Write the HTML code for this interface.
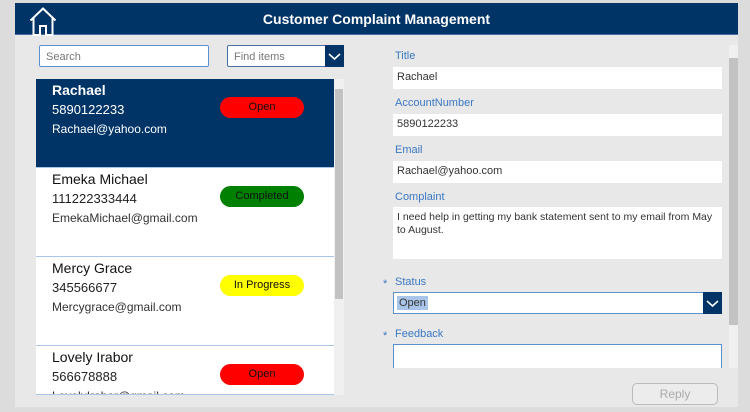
<!DOCTYPE html>
<html><head><meta charset="utf-8"><style>
*{margin:0;padding:0;box-sizing:border-box}
html,body{width:750px;height:412px;overflow:hidden}
body{background:#dcdcdc;font-family:"Liberation Sans",sans-serif;position:relative}
.a{position:absolute}
#app{left:15px;top:3px;width:723px;height:404px;background:#e8e8e8}
#hdr{left:15px;top:3px;width:723px;height:32px;background:#003366;border-bottom:1px solid #4a6fa5}
#hdr .t{left:0;width:723px;top:8px;text-align:center;color:#fff;font-weight:bold;font-size:14px}
.inp{background:#fff;border:1px solid #5b8fd0;border-radius:2px;font-size:11px;color:#777;padding:5px 6px}
.item{left:36px;width:298px;height:89px;background:#fff;border-bottom:1px solid #a9c6ea;overflow:hidden}
.item .n{position:absolute;left:16px;top:3px;font-size:14px;color:#111}
.item .p{position:absolute;left:16px;top:23px;font-size:13px;color:#222}
.item .e{position:absolute;left:16px;top:43px;font-size:12px;color:#333}
.pill{position:absolute;left:184px;top:18px;width:84px;height:21px;border-radius:11px;text-align:center;font-size:11px;line-height:21px;color:#111}
.lbl{left:395px;font-size:11px;color:#3a78c2}
.fld{left:393px;width:329px;height:22px;background:#fff;font-size:11px;color:#333;padding:4px 4px}
.star{left:383px;font-size:11px;color:#3a78c2}
</style></head><body>
<div class="a" id="app"></div>
<div class="a" id="hdr"><div class="a t">Customer Complaint Management</div>
<svg class="a" style="left:14px;top:2px" width="32" height="31" viewBox="0 0 32 31"><path d="M1.5 15.5 L14 3.5 L26.5 15.5 M4.5 13 V30 H11 V21 H17 V30 H23.5 V13" fill="none" stroke="#fff" stroke-width="2"/></svg></div>
<div class="a inp" style="left:39px;top:45px;width:170px;height:22px">Search</div>
<div class="a inp" style="left:227px;top:45px;width:117px;height:22px;border-color:#4a6fa5">Find items</div>
<div class="a" style="left:325px;top:45px;width:19px;height:22px;background:#003366"><svg width="19" height="22"><path d="M4 9 L9.5 14 L15 9" fill="none" stroke="#fff" stroke-width="1.6"/></svg></div>
<div class="a" style="left:36px;top:79px;width:308px;height:316px;background:#fff;overflow:hidden">
<div class="a item" style="left:0;top:0;background:#003366"><div class="n" style="color:#fff;font-weight:bold">Rachael</div><div class="p" style="color:#fff">5890122233</div><div class="e" style="color:#fff">Rachael@yahoo.com</div><div class="pill" style="background:#f00">Open</div></div>
<div class="a item" style="left:0;top:89px"><div class="n">Emeka Michael</div><div class="p">111222333444</div><div class="e">EmekaMichael@gmail.com</div><div class="pill" style="background:#008000">Completed</div></div>
<div class="a item" style="left:0;top:178px"><div class="n">Mercy Grace</div><div class="p">345566677</div><div class="e">Mercygrace@gmail.com</div><div class="pill" style="background:#ff0">In Progress</div></div>
<div class="a item" style="left:0;top:267px;height:49px"><div class="n">Lovely Irabor</div><div class="p">566678888</div><div class="e">LovelyIrabor@gmail.com</div><div class="pill" style="background:#f00">Open</div></div>
<div class="a" style="left:298px;top:0;width:10px;height:316px;background:#f0f0f0"></div>
<div class="a" style="left:299px;top:10px;width:8px;height:210px;background:#c2c2c2"></div>
</div>
<div class="a lbl" style="top:50px">Title</div>
<div class="a fld" style="top:67px">Rachael</div>
<div class="a lbl" style="top:97px">AccountNumber</div>
<div class="a fld" style="top:114px">5890122233</div>
<div class="a lbl" style="top:144px">Email</div>
<div class="a fld" style="top:161px">Rachael@yahoo.com</div>
<div class="a lbl" style="top:191px">Complaint</div>
<div class="a fld" style="top:207px;height:52px;line-height:13px;font-size:10.5px">I need help in getting my bank statement sent to my email from May to August.</div>
<div class="a star" style="top:278px">*</div><div class="a lbl" style="top:276px">Status</div>
<div class="a fld" style="top:292px;border:1px solid #5b8fd0;padding:4px 3px"><span style="background:#a9c6ea;padding:1px 2px">Open</span></div>
<div class="a" style="left:703px;top:292px;width:19px;height:22px;background:#003366"><svg width="19" height="22"><path d="M4 9 L9.5 14 L15 9" fill="none" stroke="#fff" stroke-width="1.6"/></svg></div>
<div class="a star" style="top:330px">*</div><div class="a lbl" style="top:328px">Feedback</div>
<div class="a fld" style="top:344px;height:24px;border:1px solid #5b8fd0;border-bottom:none"></div>
<div class="a" style="left:729px;top:45px;width:9px;height:323px;background:#f0f0f0"></div>
<div class="a" style="left:729px;top:58px;width:9px;height:267px;background:#c2c2c2"></div>
<div class="a" style="left:632px;top:383px;width:86px;height:22px;border:1px solid #bbb;border-radius:5px;background:#ececec;color:#aaa;font-size:12px;text-align:center;line-height:20px">Reply</div>
</body></html>
